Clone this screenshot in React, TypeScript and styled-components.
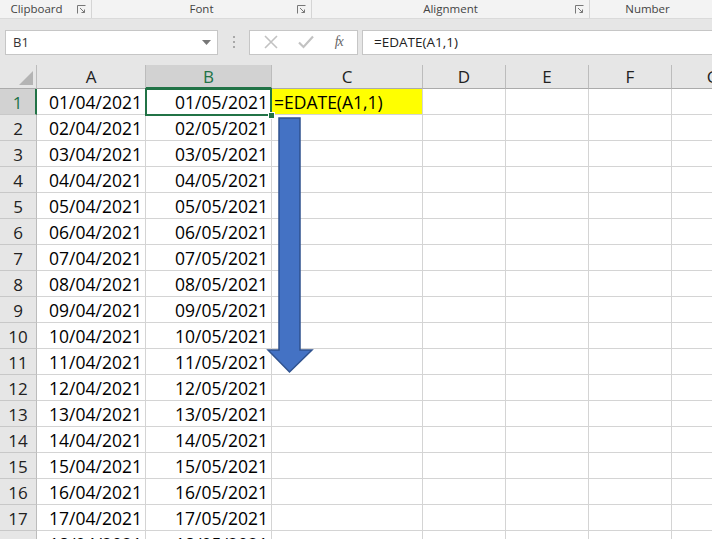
import React from 'react';
import styled, { createGlobalStyle } from 'styled-components';

const GlobalStyle = createGlobalStyle`
  html, body {
    margin: 0;
    padding: 0;
    height: 539px;
    overflow: hidden;
    background: #ffffff;
  }
  * { box-sizing: border-box; }
`;

const GREEN = '#217346';
const uiFont = `"Open Sans", "Noto Sans", sans-serif`;

const Page = styled.div`
  width: 712px;
  height: 539px;
  overflow: hidden;
  display: flex;
  flex-direction: column;
  background: #e6e6e6;
`;

const RibbonLabels = styled.div`
  height: 19px;
  display: flex;
  background: #f3f3f3;
  border-bottom: 1px solid #dadada;
  flex-shrink: 0;
`;

const Group = styled.div<{ $w: number; $last?: boolean }>`
  width: ${p => p.$w}px;
  flex-shrink: 0;
  position: relative;
  display: flex;
  align-items: center;
  justify-content: center;
  border-right: ${p => (p.$last ? 'none' : '1px solid #d5d5d5')};
  font: 11.5px ${uiFont};
  color: #444;
  padding-bottom: 1px;
`;

const Launcher = styled.svg`
  position: absolute;
  right: 5px;
  top: 5px;
`;

const FormulaBar = styled.div`
  height: 46px;
  display: flex;
  align-items: center;
  padding: 0 0 0 5px;
  flex-shrink: 0;
`;

const NameBox = styled.div`
  width: 213px;
  height: 25px;
  background: #fff;
  border: 1px solid #c6c6c6;
  display: flex;
  align-items: center;
  justify-content: space-between;
  padding: 0 6px 0 7px;
  font: 13px ${uiFont};
  color: #333;
`;

const Dots = styled.div`
  width: 31px;
  display: flex;
  flex-direction: column;
  align-items: center;
  gap: 3px;
  span {
    width: 2px;
    height: 2px;
    background: #a8a8a8;
  }
`;

const FxBox = styled.div`
  width: 109px;
  height: 25px;
  background: #fff;
  border: 1px solid #c6c6c6;
  display: flex;
  align-items: center;
  justify-content: space-around;
  padding: 0 4px;
`;

const FxLabel = styled.span`
  font: italic 14px "Liberation Serif", serif;
  color: #666;
  letter-spacing: -1px;
`;

const FormulaInput = styled.div`
  flex: 1;
  margin-left: 4px;
  height: 25px;
  background: #fff;
  border: 1px solid #c6c6c6;
  border-right: none;
  display: flex;
  align-items: center;
  padding-left: 11px;
  font: 13.5px ${uiFont};
  color: #222;
`;

const SheetArea = styled.div`
  position: relative;
  flex: 1;
  background: #fff;
  overflow: hidden;
`;

const Grid = styled.div`
  display: grid;
  grid-template-columns: 37px 109px 126px 151px 83px 83px 83px 83px;
  grid-auto-rows: 26px;
  grid-template-rows: 24px;
  font: 17.5px ${uiFont};
  color: #000;
`;

const Corner = styled.div`
  background: #e6e6e6;
  border-right: 1px solid #bcbcbc;
  border-bottom: 1px solid #ababab;
  position: relative;
  &::after {
    content: '';
    position: absolute;
    right: 3px;
    bottom: 3px;
    width: 0;
    height: 0;
    border-left: 14px solid transparent;
    border-bottom: 14px solid #b4b4b4;
  }
`;

const ColHead = styled.div<{ $sel?: boolean }>`
  background: ${p => (p.$sel ? '#d2d2d2' : '#e6e6e6')};
  color: ${p => (p.$sel ? GREEN : '#222')};
  border-right: 1px solid #bcbcbc;
  border-bottom: ${p => (p.$sel ? `2px solid ${GREEN}` : '1px solid #ababab')};
  display: flex;
  align-items: center;
  justify-content: center;
  font-size: 17px;
  padding-top: ${p => (p.$sel ? '1px' : '0')};
`;

const RowHead = styled.div<{ $sel?: boolean }>`
  background: ${p => (p.$sel ? '#d2d2d2' : '#e6e6e6')};
  color: ${p => (p.$sel ? GREEN : '#222')};
  border-right: ${p => (p.$sel ? `2px solid ${GREEN}` : '1px solid #bcbcbc')};
  border-bottom: 1px solid #c8c8c8;
  display: flex;
  align-items: center;
  justify-content: center;
  font-size: 17px;
  padding-top: 1px;
`;

const Cell = styled.div<{ $fill?: string; $align?: 'left' | 'right' }>`
  position: relative;
  background: ${p => p.$fill || '#fff'};
  border-right: 1px solid #d4d4d4;
  border-bottom: 1px solid #d4d4d4;
  display: flex;
  align-items: center;
  justify-content: ${p => (p.$align === 'left' ? 'flex-start' : 'flex-end')};
  padding: 1px 3px 0 2px;
  white-space: nowrap;
  overflow: visible;
`;

const Selection = styled.div`
  position: absolute;
  top: -1px;
  left: -1px;
  right: -1px;
  bottom: -2px;
  border: 2px solid ${GREEN};
  pointer-events: none;
  z-index: 2;
`;

const FillHandle = styled.div`
  position: absolute;
  right: -5px;
  bottom: -5px;
  width: 7px;
  height: 7px;
  background: ${GREEN};
  border: 1px solid #fff;
`;

const Arrow = styled.svg`
  position: absolute;
  left: 266px;
  top: 51px;
  z-index: 3;
`;

const columns = ['A', 'B', 'C', 'D', 'E', 'F', 'G'];
const pad = (n: number) => String(n).padStart(2, '0');
const rows = Array.from({ length: 18 }, (_, i) => i + 1);

const LauncherIcon = () => (
  <Launcher width="9" height="9" viewBox="0 0 9 9">
    <path d="M0.5 8.5V0.5H8.5" fill="none" stroke="#777" strokeWidth="1" />
    <path d="M3 3L7.5 7.5M7.5 4.5V7.5H4.5" fill="none" stroke="#777" strokeWidth="1" />
  </Launcher>
);

const App = () => {
  return (
    <Page>
      <GlobalStyle />
      <RibbonLabels>
        <Group $w={92}>
          <span style={{ marginRight: 18 }}>Clipboard</span>
          <LauncherIcon />
        </Group>
        <Group $w={220}>
          <span>Font</span>
          <LauncherIcon />
        </Group>
        <Group $w={278}>
          <span>Alignment</span>
          <LauncherIcon />
        </Group>
        <Group $w={140} $last>
          <span style={{ marginRight: 25 }}>Number</span>
        </Group>
      </RibbonLabels>
      <FormulaBar>
        <NameBox>
          <span>B1</span>
          <svg width="9" height="5" viewBox="0 0 9 5">
            <path d="M0 0H9L4.5 5Z" fill="#777" />
          </svg>
        </NameBox>
        <Dots>
          <span />
          <span />
          <span />
        </Dots>
        <FxBox>
          <svg width="14" height="14" viewBox="0 0 14 14">
            <path d="M1 1L13 13M13 1L1 13" stroke="#c2c2c2" strokeWidth="1.6" />
          </svg>
          <svg width="16" height="14" viewBox="0 0 16 14">
            <path d="M1 7.5L5.5 12L15 1.5" fill="none" stroke="#c2c2c2" strokeWidth="2.2" />
          </svg>
          <FxLabel>fx</FxLabel>
        </FxBox>
        <FormulaInput>=EDATE(A1,1)</FormulaInput>
      </FormulaBar>
      <SheetArea>
        <Grid>
          <Corner />
          {columns.map(c => (
            <ColHead key={c} $sel={c === 'B'}>
              {c}
            </ColHead>
          ))}
          {rows.map(r => (
            <React.Fragment key={r}>
              <RowHead $sel={r === 1}>{r}</RowHead>
              <Cell>{`${pad(r)}/04/2021`}</Cell>
              <Cell>
                {`${pad(r)}/05/2021`}
                {r === 1 && (
                  <Selection>
                    <FillHandle />
                  </Selection>
                )}
              </Cell>
              <Cell $fill={r === 1 ? '#ffff00' : undefined} $align="left">
                {r === 1 ? '=EDATE(A1,1)' : ''}
              </Cell>
              <Cell />
              <Cell />
              <Cell />
              <Cell />
            </React.Fragment>
          ))}
        </Grid>
        <Arrow width="48" height="260" viewBox="0 0 48 260">
          <path
            d="M13 2H34V234H46L23.5 256L2 234H13Z"
            fill="#4472c4"
            stroke="#2f528f"
            strokeWidth="1.5"
            strokeLinejoin="miter"
          />
        </Arrow>
      </SheetArea>
    </Page>
  );
};

export default App;
